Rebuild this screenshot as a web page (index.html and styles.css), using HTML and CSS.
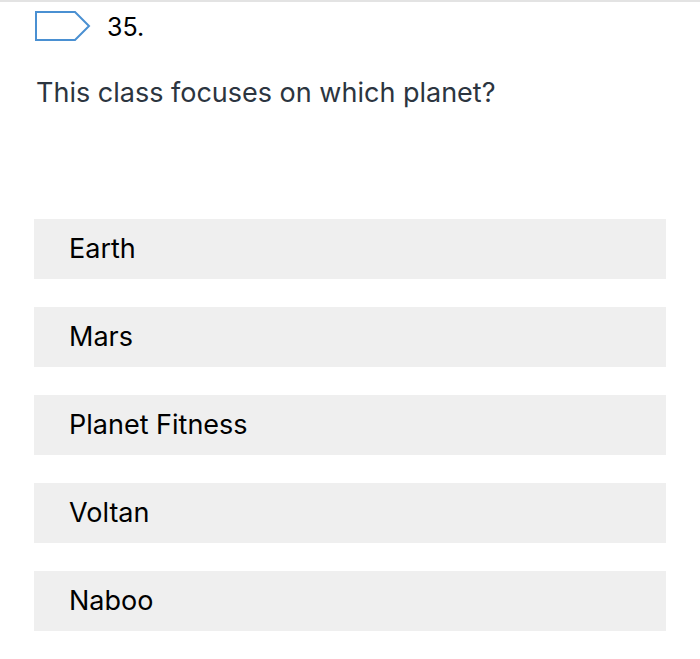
FILE: index.html
```html
<!DOCTYPE html>
<html lang="en">
<head>
    <meta charset="UTF-8">
    <meta name="viewport" content="width=device-width, initial-scale=1.0">
    <title>Question 35</title>
    <link rel="stylesheet" href="styles.css">
</head>
<body>

    <div class="question">
        <div class="question-head">
            <svg class="tag" width="58" height="32" viewBox="0 0 58 32">
                <path d="M2 2 H41 L55 16 L41 30 H2 Z" fill="none" stroke="#4a90d2" stroke-width="2"/>
            </svg>
            <span class="number">35.</span>
        </div>
        <p class="prompt">This class focuses on which planet?</p>

        <div class="answers">
            <div class="answer">Earth</div>
            <div class="answer">Mars</div>
            <div class="answer">Planet Fitness</div>
            <div class="answer">Voltan</div>
            <div class="answer">Naboo</div>
        </div>
    </div>

</body>
</html>
```

FILE: styles.css
```css
body {
    font-family: Inter, "Liberation Sans", Arial, sans-serif;
    background-color: white;
    color: black;
    margin: 0;
    padding: 0;
    border-top: 2px solid #e3e3e3;
}
.question {
    padding: 0 34px;
}
.question-head {
    display: flex;
    align-items: center;
    height: 50px;
}
.tag {
    display: block;
    flex-shrink: 0;
    width: 58px;
    height: 32px;
    margin-top: -2px;
    margin-right: 15px;
}
.number {
    font-size: 25px;
}
.prompt {
    margin: 24px 0 0 2px;
    font-size: 27px;
    color: #2c3540;
}
.answers {
    margin-top: 110px;
    display: flex;
    flex-direction: column;
    gap: 28px;
}
.answer {
    background-color: #efefef;
    height: 60px;
    line-height: 60px;
    padding-left: 35px;
    font-size: 27px;
}
```
